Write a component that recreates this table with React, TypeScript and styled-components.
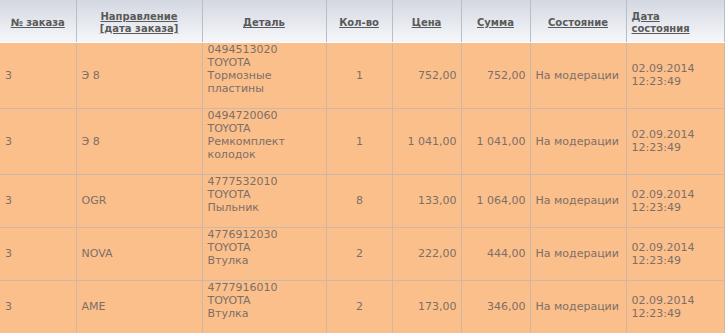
import React from 'react'
import styled, { createGlobalStyle } from 'styled-components'

//-----------------------------------------------------------------------------
// Data
//-----------------------------------------------------------------------------
const columns: IColumn[] = [
  { title: ['№ заказа'], width: 76, align: 'center' },
  { title: ['Направление', '[дата заказа]'], width: 126, align: 'center' },
  { title: ['Деталь'], width: 124, align: 'center' },
  { title: ['Кол-во'], width: 66, align: 'center' },
  { title: ['Цена'], width: 69, align: 'center' },
  { title: ['Сумма'], width: 69, align: 'center' },
  { title: ['Состояние'], width: 96, align: 'center' },
  { title: ['Дата', 'состояния'], width: 98, align: 'left' }
]

const orders = [
  { id: '3', route: 'Э 8', code: '0494513020', brand: 'TOYOTA', name: ['Тормозные', 'пластины'], qty: '1', price: '752,00', sum: '752,00' },
  { id: '3', route: 'Э 8', code: '0494720060', brand: 'TOYOTA', name: ['Ремкомплект', 'колодок'], qty: '1', price: '1 041,00', sum: '1 041,00' },
  { id: '3', route: 'OGR', code: '4777532010', brand: 'TOYOTA', name: ['Пыльник'], qty: '8', price: '133,00', sum: '1 064,00' },
  { id: '3', route: 'NOVA', code: '4776912030', brand: 'TOYOTA', name: ['Втулка'], qty: '2', price: '222,00', sum: '444,00' },
  { id: '3', route: 'AME', code: '4777916010', brand: 'TOYOTA', name: ['Втулка'], qty: '2', price: '173,00', sum: '346,00' }
]

//-----------------------------------------------------------------------------
// Component
//-----------------------------------------------------------------------------
const App = () => {
  return (
    <>
      <GlobalStyle />
      <Table>
        <colgroup>
          {columns.map((c, i) => <col key={i} style={{ width: c.width }} />)}
        </colgroup>
        <thead>
          <tr>
            {columns.map((c, i) => (
              <HeaderCell key={i} align={c.align}>
                <HeaderLink>
                  {c.title.map((line, j) => (
                    <React.Fragment key={j}>
                      {j > 0 && <br />}
                      {line}
                    </React.Fragment>
                  ))}
                </HeaderLink>
              </HeaderCell>
            ))}
          </tr>
        </thead>
        <tbody>
          {orders.map((o, i) => (
            <tr key={i}>
              <Cell>{o.id}</Cell>
              <Cell>{o.route}</Cell>
              <Cell>
                <Detail>
                  {o.code}<br />{o.brand}
                  {o.name.map((n, j) => <React.Fragment key={j}><br />{n}</React.Fragment>)}
                </Detail>
              </Cell>
              <Cell align="center">{o.qty}</Cell>
              <Cell align="right">{o.price}</Cell>
              <Cell align="right">{o.sum}</Cell>
              <Cell>На модерации</Cell>
              <Cell>02.09.2014<br />12:23:49</Cell>
            </tr>
          ))}
        </tbody>
      </Table>
    </>
  )
}

//-----------------------------------------------------------------------------
// Props
//-----------------------------------------------------------------------------
interface IColumn {
  title: string[]
  width: number
  align: 'left' | 'center' | 'right'
}

interface CellProps {
  align?: 'left' | 'center' | 'right'
}

//-----------------------------------------------------------------------------
// Styled Components
//-----------------------------------------------------------------------------
const GlobalStyle = createGlobalStyle`
  html, body {
    margin: 0;
    padding: 0;
    background: #ffffff;
    font-family: "DejaVu Sans", Verdana, sans-serif;
  }
`

const Table = styled.table`
  width: 724px;
  table-layout: fixed;
  border-collapse: collapse;
  font-size: 11px;
  line-height: 13px;
`

const HeaderCell = styled.th<CellProps>`
  height: 42px;
  padding: 4px 5px 0 5px;
  box-sizing: border-box;
  text-align: ${({ align }) => align || 'center'};
  vertical-align: middle;
  background: linear-gradient(to bottom, #d3d7e0 0%, #e6e9ef 55%, #f6f7f9 100%);
  border-left: 1px solid #b9bdc6;
  border-right: 1px solid #b9bdc6;
  border-bottom: 1px solid #ffffff;
  &:first-child {
    border-left: none;
  }
`

const HeaderLink = styled.span`
  font-size: 10px;
  font-weight: bold;
  color: #5a5a5a;
  text-decoration: underline;
  line-height: 12px;
  display: inline-block;
`

const Cell = styled.td<CellProps>`
  padding: 0 4px 0 5px;
  text-align: ${({ align }) => align || 'left'};
  vertical-align: middle;
  color: #7d6f66;
  background: #fbbf8c;
  border: 1px solid #cdb8a8;
  &:first-child {
    border-left: none;
  }
`

const Detail = styled.div`
  padding-bottom: 13px;
`

export default App
